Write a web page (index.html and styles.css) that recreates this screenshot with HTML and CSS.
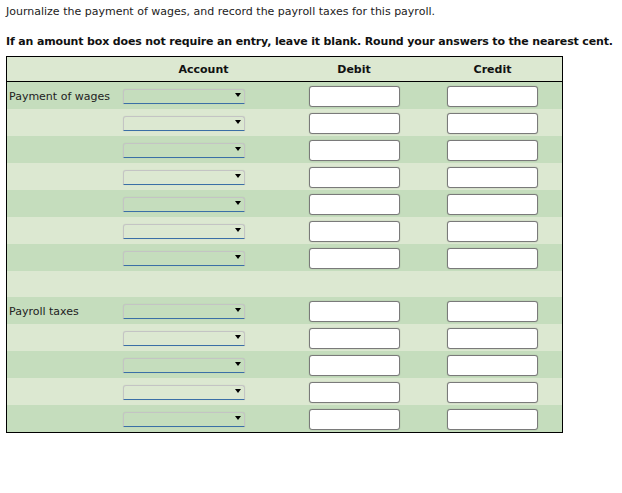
FILE: index.html
```html
<!DOCTYPE html>
<html>
<head>
<meta charset="utf-8">
<link rel="stylesheet" href="styles.css">
</head>
<body>
<p class="intro">Journalize the payment of wages, and record the payroll taxes for this payroll.</p>
<p class="note">If an amount box does not require an entry, leave it blank. Round your answers to the nearest cent.</p>
<div class="journal">
  <div class="row head light">
    <div class="cell"></div>
    <div class="cell center">Account</div>
    <div class="cell center">Debit</div>
    <div class="cell center">Credit</div>
  </div>
  <div class="row dark"><div class="cell label">Payment of wages</div><div class="cell"><span class="sel"><span class="arrow"></span></span></div><div class="cell center"><span class="amt"></span></div><div class="cell center"><span class="amt"></span></div></div>
  <div class="row light"><div class="cell label"></div><div class="cell"><span class="sel"><span class="arrow"></span></span></div><div class="cell center"><span class="amt"></span></div><div class="cell center"><span class="amt"></span></div></div>
  <div class="row dark"><div class="cell label"></div><div class="cell"><span class="sel"><span class="arrow"></span></span></div><div class="cell center"><span class="amt"></span></div><div class="cell center"><span class="amt"></span></div></div>
  <div class="row light"><div class="cell label"></div><div class="cell"><span class="sel"><span class="arrow"></span></span></div><div class="cell center"><span class="amt"></span></div><div class="cell center"><span class="amt"></span></div></div>
  <div class="row dark"><div class="cell label"></div><div class="cell"><span class="sel"><span class="arrow"></span></span></div><div class="cell center"><span class="amt"></span></div><div class="cell center"><span class="amt"></span></div></div>
  <div class="row light"><div class="cell label"></div><div class="cell"><span class="sel"><span class="arrow"></span></span></div><div class="cell center"><span class="amt"></span></div><div class="cell center"><span class="amt"></span></div></div>
  <div class="row dark"><div class="cell label"></div><div class="cell"><span class="sel"><span class="arrow"></span></span></div><div class="cell center"><span class="amt"></span></div><div class="cell center"><span class="amt"></span></div></div>
  <div class="row light blank"></div>
  <div class="row dark"><div class="cell label">Payroll taxes</div><div class="cell"><span class="sel"><span class="arrow"></span></span></div><div class="cell center"><span class="amt"></span></div><div class="cell center"><span class="amt"></span></div></div>
  <div class="row light"><div class="cell label"></div><div class="cell"><span class="sel"><span class="arrow"></span></span></div><div class="cell center"><span class="amt"></span></div><div class="cell center"><span class="amt"></span></div></div>
  <div class="row dark"><div class="cell label"></div><div class="cell"><span class="sel"><span class="arrow"></span></span></div><div class="cell center"><span class="amt"></span></div><div class="cell center"><span class="amt"></span></div></div>
  <div class="row light"><div class="cell label"></div><div class="cell"><span class="sel"><span class="arrow"></span></span></div><div class="cell center"><span class="amt"></span></div><div class="cell center"><span class="amt"></span></div></div>
  <div class="row dark"><div class="cell label"></div><div class="cell"><span class="sel"><span class="arrow"></span></span></div><div class="cell center"><span class="amt"></span></div><div class="cell center"><span class="amt"></span></div></div>
</div>
</body>
</html>
```
FILE: styles.css
```css
html, body {
  margin: 0;
  padding: 0;
  background: #fff;
}
body {
  padding: 0 6px;
  font-family: "DejaVu Sans", Verdana, sans-serif;
  font-size: 11px;
  color: #222;
}
.intro {
  margin: 5px 0 0 0;
  line-height: 14px;
  letter-spacing: 0;
}
.note {
  margin: 16px 0 0 0;
  line-height: 14px;
  font-weight: bold;
  letter-spacing: -0.15px;
  color: #111;
}
.journal {
  margin-top: 7px;
  width: 555px;
  border: 1px solid #000;
}
.row {
  display: grid;
  grid-template-columns: 115px 163px 138px 139px;
  height: 27px;
  align-items: center;
}
.row.head {
  height: 24px;
  border-bottom: 1px solid #000;
  font-weight: bold;
  color: #111;
}
.row.blank {
  height: 26px;
}
.light { background: #dce8d1; }
.dark { background: #c5ddbd; }
.cell {
  display: flex;
  align-items: center;
  height: 100%;
}
.center {
  justify-content: center;
}
.label {
  padding-left: 2px;
  padding-top: 1px;
  box-sizing: border-box;
  color: #222;
}
.sel {
  position: relative;
  display: block;
  margin-left: 1px;
  margin-top: 1px;
  width: 120px;
  height: 13px;
  border: 1px solid #c4c4c4;
  border-bottom: 1px solid #3b6fa6;
  border-radius: 3px 3px 0 0;
  box-shadow: 0 0 1px rgba(0,0,0,0.15);
}
.arrow {
  position: absolute;
  right: 3px;
  top: 3px;
  width: 0;
  height: 0;
  border-left: 3px solid transparent;
  border-right: 3px solid transparent;
  border-top: 4px solid #000;
}
.amt {
  display: block;
  margin-top: 1px;
  width: 89px;
  height: 19px;
  background: #fff;
  border: 1px solid #7a7a7a;
  border-radius: 3px;
  box-shadow: 0 0 1px rgba(0,0,0,0.35);
}
```
